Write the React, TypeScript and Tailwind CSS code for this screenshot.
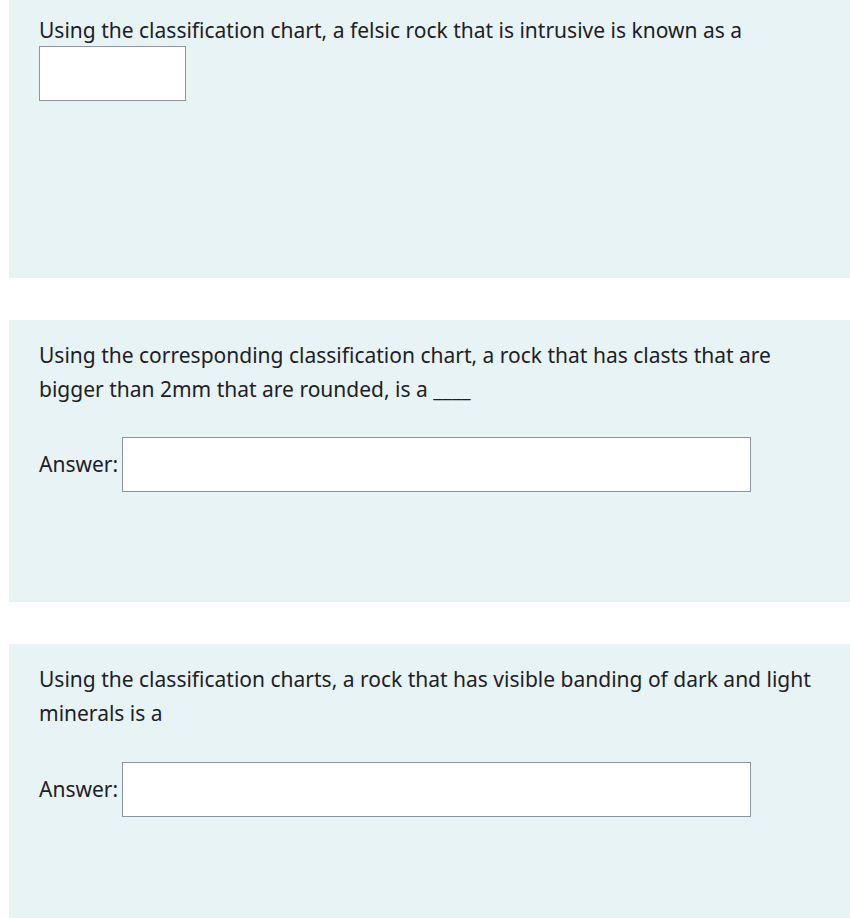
const Field = ({ className }: { className: string }) => (
  <input
    type="text"
    className={`h-[55px] border border-[#8f959e] bg-white outline-none ${className}`}
  />
);

export default function App() {
  return (
    <div
      className="min-h-[918px] bg-white text-[#1d2125]"
      style={{ fontFamily: '"Noto Sans", sans-serif' }}
    >
      <div className="ml-[9px] h-[278px] bg-[#e7f3f5] px-[30px] pt-[13px]">
        <p className="text-[21px] leading-[34px]">
          Using the classification chart, a felsic rock that is intrusive is known as a
        </p>
        <Field className="-mt-[1px] block w-[147px]" />
      </div>

      <div className="ml-[9px] mt-[42px] h-[282px] bg-[#e7f3f5] pl-[30px] pr-[40px] pt-[18px]">
        <p className="text-[21px] leading-[34px]">
          Using the corresponding classification chart, a rock that has clasts that are
          bigger than 2mm that are rounded, is a ____
        </p>
        <div className="mt-[31px] flex items-center">
          <span className="w-[83px] text-[21px]">Answer:</span>
          <Field className="w-[629px]" />
        </div>
      </div>

      <div className="ml-[9px] mt-[42px] h-[274px] bg-[#e7f3f5] px-[30px] pt-[18px]">
        <p className="text-[21px] leading-[34px]">
          Using the classification charts, a rock that has visible banding of dark and light
          minerals is a
        </p>
        <div className="mt-[32px] flex items-center">
          <span className="w-[83px] text-[21px]">Answer:</span>
          <Field className="w-[629px]" />
        </div>
      </div>
    </div>
  );
}
